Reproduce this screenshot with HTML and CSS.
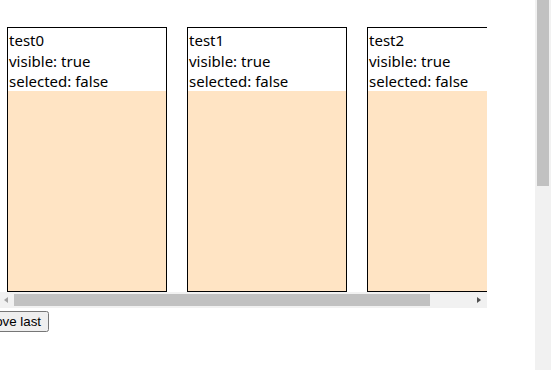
FILE: index.html
```html
<!DOCTYPE html>
<html>
<head>
<meta charset="utf-8">
<link rel="stylesheet" href="styles.css">
</head>
<body>
<div class="layout">
  <div class="main">
    <div class="scroller">
      <div class="viewport">
        <div class="track">
          <div class="card">
            <div class="info">
              <div>test0</div>
              <div>visible: true</div>
              <div>selected: false</div>
            </div>
            <div class="fill"></div>
          </div>
          <div class="card">
            <div class="info">
              <div>test1</div>
              <div>visible: true</div>
              <div>selected: false</div>
            </div>
            <div class="fill"></div>
          </div>
          <div class="card">
            <div class="info">
              <div>test2</div>
              <div>visible: true</div>
              <div>selected: false</div>
            </div>
            <div class="fill"></div>
          </div>
        </div>
      </div>
      <div class="hbar">
        <span class="arrow-left"></span>
        <span class="hthumb"></span>
        <span class="hgap"></span>
        <span class="arrow-right"></span>
      </div>
    </div>
    <button class="remove">Remove last</button>
  </div>
  <div class="vbar">
    <div class="vthumb"></div>
  </div>
</div>
</body>
</html>
```
FILE: styles.css
```css
html, body {
  margin: 0;
  padding: 0;
  background: #ffffff;
  overflow: hidden;
}
.layout {
  display: flex;
  height: 370px;
}
.main {
  flex: 1;
  min-width: 0;
  padding-top: 27px;
}
.scroller {
  width: 487px;
}
.viewport {
  width: 487px;
  overflow: hidden;
}
.track {
  display: flex;
  gap: 20px;
  padding-left: 7px;
  width: max-content;
}
.card {
  width: 158px;
  border: 1px solid #000000;
  background: #ffffff;
  flex: none;
}
.info {
  box-sizing: border-box;
  height: 63px;
  padding-top: 2px;
  padding-left: 1px;
  font-family: "Noto Sans", sans-serif;
  font-size: 15px;
  line-height: 20.5px;
  color: #000000;
}
.fill {
  height: 200px;
  background: #ffe4c4;
}
.hbar {
  height: 16px;
  background: #f1f1f1;
  display: flex;
  align-items: center;
}
.arrow-left {
  width: 0;
  height: 0;
  margin-left: 4px;
  border-top: 3.5px solid transparent;
  border-bottom: 3.5px solid transparent;
  border-right: 4px solid #a3a3a3;
}
.hthumb {
  width: 416px;
  height: 12px;
  margin-left: 6px;
  background: #c1c1c1;
}
.hgap {
  flex: 1;
}
.arrow-right {
  width: 0;
  height: 0;
  margin-right: 6px;
  border-top: 3.5px solid transparent;
  border-bottom: 3.5px solid transparent;
  border-left: 4px solid #505050;
}
.remove {
  margin-top: 3px;
  margin-left: -41px;
  font-family: "Liberation Sans", Arial, sans-serif;
  font-size: 13.333px;
}
.vbar {
  width: 16px;
  flex: none;
  background: #f1f1f1;
}
.vthumb {
  height: 186px;
  margin: 0 2px;
  background: #c1c1c1;
}
```
